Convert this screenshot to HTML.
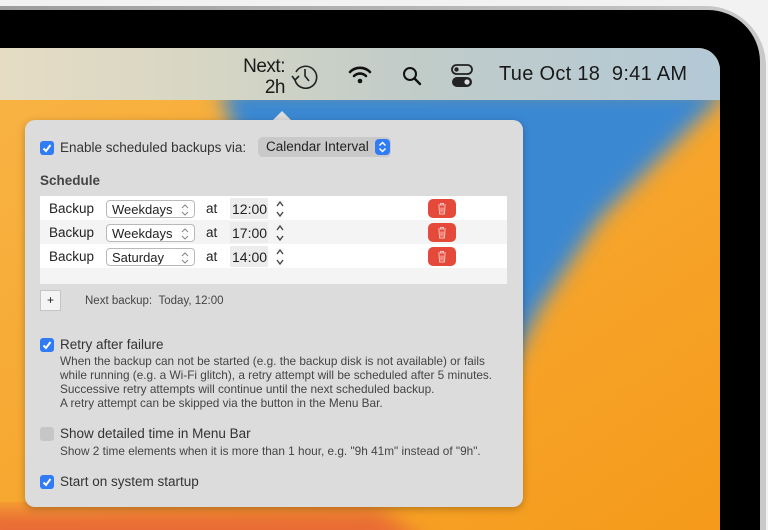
<!DOCTYPE html>
<html><head><meta charset="utf-8"><style>
*{margin:0;padding:0;box-sizing:border-box}
html,body{width:768px;height:530px;overflow:hidden}
body{position:relative;background:#f2f2f2;font-family:"Liberation Sans",sans-serif;color:#222}
.edge{position:absolute;left:-40px;top:6px;width:806px;height:530px;border-radius:0 60px 0 0;background:linear-gradient(90deg,#9a9a9a,#c9c9c9);}
.bezel{position:absolute;left:-40px;top:10px;width:800px;height:530px;border-radius:0 52px 0 0;background:#000}
.screen{position:absolute;left:0;top:48px;width:720px;height:482px;border-radius:0 22px 0 0;overflow:hidden}
.menubar{position:absolute;left:0;top:0;width:720px;height:52px;background:linear-gradient(90deg,#e6dcc4 0%,#d6d6c4 30%,#c2ccc8 55%,#b3c9d6 100%);}
.mt{position:absolute;font-size:20px;color:#1a1a1a}
.panel{position:absolute;left:25px;top:120px;width:498px;height:387px;background:#dcdcdc;border-radius:10px;box-shadow:0 2px 8px rgba(0,0,0,.25)}
.arrow{position:absolute;left:272px;top:111px;width:0;height:0;border-left:10px solid transparent;border-right:10px solid transparent;border-bottom:10px solid #dcdcdc}
.cb{position:absolute;width:14px;height:14px;border-radius:3px;background:#2f7cf6}
.cb svg{position:absolute;left:1px;top:1px}
.cb.off{background:#c6c6c6}
.t{position:absolute;font-size:13.5px;white-space:nowrap}
.s{position:absolute;font-size:11.8px;color:#444;line-height:15px;white-space:nowrap}
.table{position:absolute;left:15px;top:76px;width:467px;height:88px;background:#f4f4f4}
.row{position:absolute;left:0;width:467px;height:24px}
.pop{position:absolute;left:66px;top:4px;width:89px;height:18px;border:1px solid #b9b9b9;border-radius:4px;background:#fff;font-size:13px;padding:1px 0 0 5px}
.pop svg{position:absolute;right:4px;top:2px}
.time{position:absolute;left:190px;top:2px;width:38px;height:21px;background:#ececec;font-size:14px;padding:3px 0 0 2px}
.del{position:absolute;left:388px;top:3px;width:28px;height:19px;border-radius:5px;background:#e5493a}
</style></head><body>
<div class="edge"></div>
<div class="bezel"></div>
<div class="screen">
 <svg width="720" height="482" style="position:absolute;left:0;top:0">
  <defs>
   <filter id="b" x="-20%" y="-20%" width="140%" height="140%"><feGaussianBlur stdDeviation="10"/></filter>
   <linearGradient id="og" x1="0" y1="0" x2="1" y2="1"><stop offset="0" stop-color="#f8b445"/><stop offset="1" stop-color="#f59a1a"/></linearGradient>
  </defs>
  <rect width="720" height="482" fill="url(#og)"/>
  <polygon filter="url(#b)" points="220,40 730,40 700,70 600,170 540,260 500,340 400,360 300,300" fill="#3a88d2"/>
  <polygon filter="url(#b)" points="-20,462 380,462 430,500 -20,500" fill="#e86a35"/>
 </svg>
 <div class="menubar"></div>
 <div class="mt" style="left:225px;top:8px;line-height:21px;text-align:right;width:60px;font-size:19px;letter-spacing:-0.5px">Next:<br>2h</div>
 <svg style="position:absolute;left:290px;top:15px" width="30" height="26" viewBox="0 0 30 26"><path d="M6 9 A11 11 0 1 1 5 17" fill="none" stroke="#222" stroke-width="1.6"/><path d="M2 13 L5 17 L9 13" fill="none" stroke="#222" stroke-width="1.6"/><path d="M15 6 V13 L19 18" fill="none" stroke="#222" stroke-width="1.6"/></svg>
 <svg style="position:absolute;left:348px;top:17px" width="24" height="20" viewBox="0 0 24 20"><path d="M2 7 A14 14 0 0 1 22 7" fill="none" stroke="#111" stroke-width="2.6" stroke-linecap="round"/><path d="M6 11 A8.5 8.5 0 0 1 18 11" fill="none" stroke="#111" stroke-width="2.6" stroke-linecap="round"/><circle cx="12" cy="16" r="2.3" fill="#111"/></svg>
 <svg style="position:absolute;left:401px;top:17px" width="22" height="22" viewBox="0 0 22 22"><circle cx="9" cy="9" r="6" fill="none" stroke="#111" stroke-width="2"/><path d="M13.5 13.5 L19 19" stroke="#111" stroke-width="2.4" stroke-linecap="round"/></svg>
 <svg style="position:absolute;left:450px;top:15px" width="24" height="26" viewBox="0 0 24 26"><rect x="2" y="2" width="20" height="9" rx="4.5" fill="none" stroke="#222" stroke-width="1.8"/><circle cx="6.5" cy="6.5" r="2.2" fill="#222"/><rect x="2" y="14" width="20" height="10" rx="5" fill="#222"/><circle cx="17" cy="19" r="2.6" fill="#ddd"/></svg>
 <div class="mt" style="left:499px;top:15px;letter-spacing:0.3px">Tue Oct 18&nbsp;&nbsp;9:41 AM</div>
</div>
<div class="arrow"></div>
<div class="panel">
 <div class="cb" style="left:15px;top:21px"><svg width="12" height="12"><path d="M2.5 6.5 L5 9 L9.5 3" fill="none" stroke="#fff" stroke-width="2"/></svg></div>
 <div class="t" style="left:35px;top:20px;color:#333">Enable scheduled backups via:</div>
 <div style="position:absolute;left:233px;top:17px;width:133px;height:20px;background:#c9c9c9;border-radius:5px;font-size:13.5px;padding:2px 0 0 8px;color:#222">Calendar Interval
  <div style="position:absolute;right:1px;top:2px;width:15px;height:16px;background:#2f7cf6;border-radius:4px"><svg width="15" height="16"><path d="M4.5 6.5 L7.5 3.5 L10.5 6.5 M4.5 9.5 L7.5 12.5 L10.5 9.5" fill="none" stroke="#fff" stroke-width="1.5"/></svg></div></div>
 <div class="t" style="left:15px;top:53px;font-weight:bold;color:#444">Schedule</div>
 <div class="table">
  <div class="row" style="top:0;background:#fff"><div class="t" style="left:9px;top:5px">Backup</div><div class="pop">Weekdays<svg width="10" height="14"><path d="M2 5 L5 2 L8 5 M2 9 L5 12 L8 9" fill="none" stroke="#888" stroke-width="1.1"/></svg></div><div class="t" style="left:166px;top:5px">at</div><div class="time">12:00</div><svg style="position:absolute;left:234px;top:3px" width="12" height="20"><path d="M3 7 L6 3 L9 7 M3 13 L6 17 L9 13" fill="none" stroke="#444" stroke-width="1.4"/></svg><div class="del"><svg width="28" height="19"><path d="M10 6 H18 M12.5 6 V4.5 H15.5 V6 M11 7 L11.6 15 H16.4 L17 7 M13 8.5 V13.5 M15 8.5 V13.5" fill="none" stroke="#f7c2bb" stroke-width="1"/></svg></div></div>
  <div class="row" style="top:24px"><div class="t" style="left:9px;top:5px">Backup</div><div class="pop">Weekdays<svg width="10" height="14"><path d="M2 5 L5 2 L8 5 M2 9 L5 12 L8 9" fill="none" stroke="#888" stroke-width="1.1"/></svg></div><div class="t" style="left:166px;top:5px">at</div><div class="time">17:00</div><svg style="position:absolute;left:234px;top:3px" width="12" height="20"><path d="M3 7 L6 3 L9 7 M3 13 L6 17 L9 13" fill="none" stroke="#444" stroke-width="1.4"/></svg><div class="del"><svg width="28" height="19"><path d="M10 6 H18 M12.5 6 V4.5 H15.5 V6 M11 7 L11.6 15 H16.4 L17 7 M13 8.5 V13.5 M15 8.5 V13.5" fill="none" stroke="#f7c2bb" stroke-width="1"/></svg></div></div>
  <div class="row" style="top:48px;background:#fff"><div class="t" style="left:9px;top:5px">Backup</div><div class="pop">Saturday<svg width="10" height="14"><path d="M2 5 L5 2 L8 5 M2 9 L5 12 L8 9" fill="none" stroke="#888" stroke-width="1.1"/></svg></div><div class="t" style="left:166px;top:5px">at</div><div class="time">14:00</div><svg style="position:absolute;left:234px;top:3px" width="12" height="20"><path d="M3 7 L6 3 L9 7 M3 13 L6 17 L9 13" fill="none" stroke="#444" stroke-width="1.4"/></svg><div class="del"><svg width="28" height="19"><path d="M10 6 H18 M12.5 6 V4.5 H15.5 V6 M11 7 L11.6 15 H16.4 L17 7 M13 8.5 V13.5 M15 8.5 V13.5" fill="none" stroke="#f7c2bb" stroke-width="1"/></svg></div></div>
 </div>
 <div style="position:absolute;left:15px;top:170px;width:21px;height:21px;border:1px solid #c4c4c4;background:#f4f4f4;font-size:12px;text-align:center;line-height:19px">+</div>
 <div class="s" style="left:60px;top:174px;font-size:11.5px">Next backup:&nbsp;&nbsp;Today, 12:00</div>
 <div class="cb" style="left:15px;top:218px"><svg width="12" height="12"><path d="M2.5 6.5 L5 9 L9.5 3" fill="none" stroke="#fff" stroke-width="2"/></svg></div>
 <div class="t" style="left:35px;top:217px;color:#333">Retry after failure</div>
 <div class="s" style="left:35px;top:234px;line-height:14px">When the backup can not be started (e.g. the backup disk is not available) or fails<br>while running (e.g. a Wi-Fi glitch), a retry attempt will be scheduled after 5 minutes.<br>Successive retry attempts will continue until the next scheduled backup.<br>A retry attempt can be skipped via the button in the Menu Bar.</div>
 <div class="cb off" style="left:15px;top:307px"></div>
 <div class="t" style="left:35px;top:306px;color:#333">Show detailed time in Menu Bar</div>
 <div class="s" style="left:35px;top:324px">Show 2 time elements when it is more than 1 hour, e.g. "9h 41m" instead of "9h".</div>
 <div class="cb" style="left:15px;top:355px"><svg width="12" height="12"><path d="M2.5 6.5 L5 9 L9.5 3" fill="none" stroke="#fff" stroke-width="2"/></svg></div>
 <div class="t" style="left:35px;top:354px;color:#333">Start on system startup</div>
</div>
</body></html>
